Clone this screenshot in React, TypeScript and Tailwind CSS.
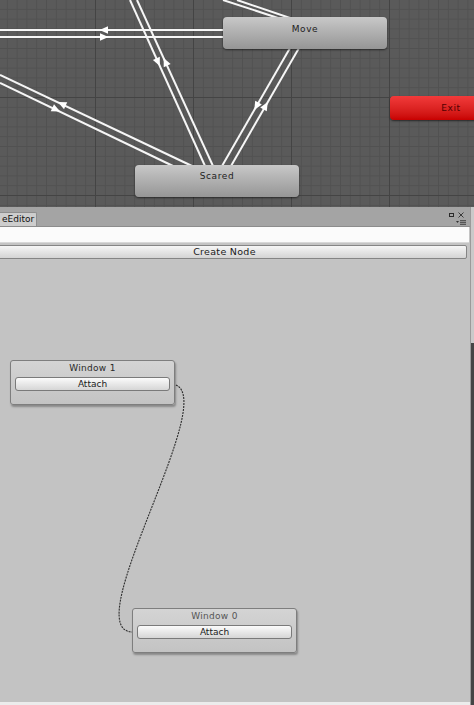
import React from "react";

// Animator graph (top, dark) + node editor window (bottom, light)

type Pt = [number, number];

const pairs: { a: [Pt, Pt]; b: [Pt, Pt]; arrows: { x: number; y: number; r: number }[] }[] = [
  // horizontal pair into Move
  {
    a: [[0, 30], [223, 30]],
    b: [[0, 37], [223, 37]],
    arrows: [
      { x: 104, y: 30, r: 180 },
      { x: 104, y: 37, r: 0 },
    ],
  },
  // from top into Scared
  {
    a: [[130, 0], [205, 166]],
    b: [[137, 0], [213, 166]],
    arrows: [
      { x: 158, y: 62, r: 65.6 },
      { x: 165.5, y: 62, r: 245.6 },
    ],
  },
  // from left into Scared
  {
    a: [[0, 75], [192, 166]],
    b: [[0, 83], [173, 166]],
    arrows: [
      { x: 62, y: 104, r: 205.1 },
      { x: 56, y: 109.5, r: 25.1 },
    ],
  },
  // Move -> Scared
  {
    a: [[290, 48], [222, 166]],
    b: [[299, 48], [231, 166]],
    arrows: [
      { x: 256.5, y: 106, r: 120.2 },
      { x: 265.5, y: 106, r: 300.2 },
    ],
  },
  // top right into Move
  {
    a: [[223, 0], [278, 18]],
    b: [[237, 0], [290, 18]],
    arrows: [],
  },
];

function Arrow({ x, y, r }: { x: number; y: number; r: number }) {
  return (
    <polygon
      points="4.5,0 -4,-3.8 -4,3.8"
      fill="#ffffff"
      transform={`translate(${x} ${y}) rotate(${r})`}
    />
  );
}

function GraphLines() {
  const minor = [0, 9.8, 19.6, 29.4, 39.2, 49, 58.8, 68.6, 78.4, 88.2];
  return (
    <svg className="absolute inset-0" width={474} height={207} viewBox="0 0 474 207">
      <defs>
        <pattern id="grid" x={95} y={97} width={98} height={98} patternUnits="userSpaceOnUse">
          {minor.map((m) => (
            <g key={m}>
              <line x1={m + 0.5} y1={0} x2={m + 0.5} y2={98} stroke="#515151" strokeWidth={1} />
              <line x1={0} y1={m + 0.5} x2={98} y2={m + 0.5} stroke="#515151" strokeWidth={1} />
            </g>
          ))}
          <line x1={0.5} y1={0} x2={0.5} y2={98} stroke="#444444" strokeWidth={1} />
          <line x1={0} y1={0.5} x2={98} y2={0.5} stroke="#444444" strokeWidth={1} />
        </pattern>
      </defs>
      <rect width={474} height={207} fill="url(#grid)" />
      {pairs.map((p, i) => (
        <g key={i}>
          <line x1={p.a[0][0]} y1={p.a[0][1]} x2={p.a[1][0]} y2={p.a[1][1]} stroke="#f6f6f6" strokeWidth={2} />
          <line x1={p.b[0][0]} y1={p.b[0][1]} x2={p.b[1][0]} y2={p.b[1][1]} stroke="#f6f6f6" strokeWidth={2} />
          {p.arrows.map((a, j) => (
            <Arrow key={j} {...a} />
          ))}
        </g>
      ))}
    </svg>
  );
}

function StateNode({ label, className, textClass }: { label: string; className: string; textClass: string }) {
  return (
    <div className={`absolute rounded-[4px] shadow-[0_1px_2px_rgba(0,0,0,0.55)] ${className}`}>
      <div className={`text-center text-[9px] leading-[10px] tracking-[0.6px] ${textClass}`}>{label}</div>
    </div>
  );
}

function NodeWindow({ title, titleColor, className }: { title: string; titleColor: string; className: string }) {
  return (
    <div
      className={`absolute w-[165px] h-[45px] flex flex-col rounded-[3px] border border-[#7e7e7e] bg-linear-to-b from-[#d4d4d4] to-[#c3c3c3] shadow-[1px_2px_2px_rgba(0,0,0,0.3)] ${className}`}
    >
      <div className={`h-[15px] text-center text-[9px] leading-[15px] tracking-[0.3px] ${titleColor}`}>{title}</div>
      <div className="mx-[4px] mt-[1px] h-[14px] rounded-[3px] border border-[#7a7a7a] bg-linear-to-b from-[#fbfbfb] to-[#d6d6d6] text-center text-[9px] leading-[12px] text-[#1a1a1a]">
        Attach
      </div>
    </div>
  );
}

export default function App() {
  return (
    <div className="w-[474px] h-[705px] overflow-hidden font-['DejaVu_Sans',sans-serif] select-none">
      {/* Animator graph */}
      <div className="relative h-[207px] bg-[#5a5a5a] overflow-hidden">
        <GraphLines />
        <StateNode
          label="Move"
          className="left-[223px] top-[17px] w-[164px] h-[32px] pt-[7px] bg-linear-to-b from-[#c8c8c8] to-[#969696]"
          textClass="text-[#222]"
        />
        <StateNode
          label="Scared"
          className="left-[135px] top-[165px] w-[164px] h-[32px] pt-[6px] bg-linear-to-b from-[#c8c8c8] to-[#969696]"
          textClass="text-[#222]"
        />
        <StateNode
          label="Exit"
          className="left-[390px] top-[96px] w-[122px] h-[24px] pt-[7px] bg-linear-to-b from-[#f23a3a] to-[#c80000]"
          textClass="text-[#520000]"
        />
      </div>

      {/* Node editor panel */}
      <div className="flex h-[498px]">
        <div className="w-[471px] flex flex-col bg-[#c4c4c4] border-r border-[#9a9a9a]">
          {/* tab bar */}
          <div className="h-[20px] flex items-end justify-between bg-[#a4a4a4] border-b border-[#8c8c8c]">
            <div className="h-[14px] px-[2px] rounded-tr-[2px] border-t border-r border-[#8e8e8e] bg-[#cdcdcd] text-[9px] leading-[13px] text-[#111]">
              eEditor
            </div>
            <div className="self-start pt-[5px] pr-[4px] flex flex-col items-end gap-[2px]">
              <svg width={18} height={6} viewBox="0 0 18 6">
                <rect x={1.5} y={1.5} width={4} height={3} fill="none" stroke="#2a2a2a" strokeWidth={1} />
                <path d="M10.5 0.5 L15.5 5.5 M15.5 0.5 L10.5 5.5" stroke="#3a3a3a" strokeWidth={1} />
              </svg>
              <svg width={10} height={5} viewBox="0 0 10 5">
                <path d="M0 1 L3 1 L1.5 3 Z" fill="#333" />
                <rect x={4} y={0} width={6} height={5} fill="#555" />
                <path d="M4 1.5 H10 M4 3.5 H10" stroke="#999" strokeWidth={0.8} />
              </svg>
            </div>
          </div>
          {/* toolbar field */}
          <div className="h-[16px] mr-[1px] bg-[#fbfbfb] border-b border-[#d8d8d8]" />
          {/* create button (panel is clipped on the left) */}
          <div className="mt-[2px] -ml-[18px] mr-[3px] h-[14px] rounded-[2px] border border-[#858585] bg-linear-to-b from-[#f6f6f6] to-[#d4d4d4] text-center text-[9.5px] leading-[12px] tracking-[0.3px] text-[#1a1a1a]">
            Create Node
          </div>
          {/* node canvas */}
          <div className="relative flex-1 mt-[1px] bg-[#c3c3c3] border-b-[3px] border-[#ececec]">
            <svg className="absolute inset-0" width={470} height={440} viewBox="0 0 470 440">
              <path
                d="M170 124 C230 124 73 372 133 372"
                fill="none"
                stroke="#2e2e2e"
                strokeWidth={1.1}
                strokeDasharray="2 1"
              />
            </svg>
            <NodeWindow title="Window 1" titleColor="text-[#2a2a2a]" className="left-[10px] top-[100px]" />
            <NodeWindow title="Window 0" titleColor="text-[#555]" className="left-[132px] top-[348px]" />
          </div>
        </div>
        <div className="w-[3px] flex flex-col">
          <div className="h-[136px] bg-[#c9c9c9]" />
          <div className="flex-1 bg-[#454545]" />
        </div>
      </div>
    </div>
  );
}
